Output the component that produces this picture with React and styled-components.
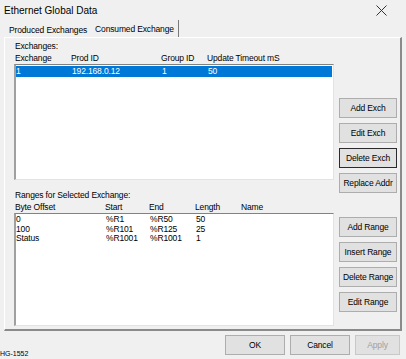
import React from 'react';
import styled, { createGlobalStyle } from 'styled-components';

const GlobalStyle = createGlobalStyle`
  html, body { margin: 0; padding: 0; background: #f0f0f0; }
  body { font-family: "Liberation Sans", Arial, sans-serif; color: #000; }
`;

const Window = styled.div`
  width: 406px;
  height: 359px;
  display: flex;
  flex-direction: column;
  background: #f0f0f0;
  overflow: hidden;
`;

const TitleBar = styled.div`
  height: 20px;
  display: flex;
  align-items: center;
  justify-content: space-between;
  padding: 0 19px 0 4px;
  font-size: 10px;
`;

const TabStrip = styled.div`
  height: 17px;
  display: flex;
  align-items: flex-end;
  padding-left: 5px;
`;

const Tab = styled.div`
  font-size: 8.5px;
  letter-spacing: -0.15px;
  padding: 0 4px;
  border-right: ${({ active }) => (active ? '1px solid #7a7a7a' : 'none')};
  height: ${({ active }) => (active ? '17px' : '15px')};
  display: flex;
  align-items: center;
`;

const Panel = styled.div`
  margin: 0 4px;
  height: 294px;
  box-sizing: border-box;
  border-left: 1px solid #ffffff;
  border-top: 1px solid #ffffff;
  border-right: 2px solid #8a8a8a;
  border-bottom: 2px solid #8a8a8a;
  padding: 2px 0 0 9px;
  display: flex;
  flex-direction: column;
  font-size: 8.5px;
  letter-spacing: -0.15px;
`;

const SectionLabel = styled.div`
  line-height: 12px;
  margin-left: 1px;
  margin-top: ${({ gap }) => gap || 0}px;
`;

const SectionRow = styled.div`
  display: flex;
  align-items: flex-start;
  gap: 5px;
  height: ${({ h }) => h}px;
`;

const ListArea = styled.div`
  width: 320px;
  display: flex;
  flex-direction: column;
`;

const HeaderRow = styled.div`
  display: flex;
  line-height: 12px;
  padding-left: 1px;
`;

const Cell = styled.div`
  width: ${({ w }) => (w ? `${w}px` : 'auto')};
  flex: ${({ w }) => (w ? 'none' : '1')};
  white-space: nowrap;
`;

const ListBox = styled.div`
  height: ${({ h }) => h}px;
  background: #fff;
  border-top: 1px solid #828282;
  border-left: 2px solid #a0a0a0;
  border-right: 1px solid #e3e3e3;
  border-bottom: 1px solid #e3e3e3;
  box-sizing: border-box;
  padding: 1px 1px 0 0;
`;

const Row = styled.div`
  display: flex;
  line-height: ${({ selected }) => (selected ? 11 : 9.5)}px;
  padding-left: 0;
  background: ${({ selected }) => (selected ? '#0078d7' : 'transparent')};
  color: ${({ selected }) => (selected ? '#fff' : '#000')};
`;

const ButtonCol = styled.div`
  display: flex;
  flex-direction: column;
  gap: 5px;
  padding-top: ${({ top }) => top}px;
`;

const Button = styled.div`
  width: ${({ w }) => w || 58}px;
  height: 20px;
  box-sizing: border-box;
  background: #e1e1e1;
  border: 1px solid ${({ focus, disabled }) => (focus ? '#2b2b2b' : disabled ? '#c8c8c8' : '#adadad')};
  color: ${({ disabled }) => (disabled ? '#a0a0a0' : '#000')};
  font-size: 8.5px;
  letter-spacing: -0.15px;
  display: flex;
  align-items: center;
  justify-content: center;
  white-space: nowrap;
`;

const Footer = styled.div`
  flex: 1;
  display: flex;
  align-items: flex-start;
  justify-content: space-between;
  padding: 4px 6px 0 0;
`;

const Stamp = styled.div`
  font-size: 7px;
  align-self: flex-end;
  margin-bottom: 2px;
`;

const FooterButtons = styled.div`
  display: flex;
  gap: 5px;
`;

const CloseIcon = () => (
  <svg width="11" height="11" viewBox="0 0 11 11">
    <path d="M0.5 0.5 L10.5 10.5 M10.5 0.5 L0.5 10.5" stroke="#333" strokeWidth="1" />
  </svg>
);

const exchCols = [56, 90, 46, 0];
const rangeCols = [90, 44, 46, 46, 0];

const exchanges = [['1', '192.168.0.12', '1', '50']];
const ranges = [
  ['0', '%R1', '%R50', '50', ''],
  ['100', '%R101', '%R125', '25', ''],
  ['Status', '%R1001', '%R1001', '1', ''],
];

export default function App() {
  return (
    <Window>
      <GlobalStyle />
      <TitleBar>
        <span>Ethernet Global Data</span>
        <CloseIcon />
      </TitleBar>
      <TabStrip>
        <Tab>Produced Exchanges</Tab>
        <Tab active>Consumed Exchange</Tab>
      </TabStrip>
      <Panel>
        <SectionLabel>Exchanges:</SectionLabel>
        <SectionRow h={128}>
          <ListArea>
            <HeaderRow>
              {['Exchange', 'Prod ID', 'Group ID', 'Update Timeout mS'].map((h, i) => (
                <Cell key={h} w={exchCols[i]}>{h}</Cell>
              ))}
            </HeaderRow>
            <ListBox h={116}>
              {exchanges.map((r, j) => (
                <Row key={j} selected>
                  {r.map((v, i) => <Cell key={i} w={exchCols[i]}>{v}</Cell>)}
                </Row>
              ))}
            </ListBox>
          </ListArea>
          <ButtonCol top={46}>
            <Button>Add Exch</Button>
            <Button>Edit Exch</Button>
            <Button focus>Delete Exch</Button>
            <Button>Replace Addr</Button>
          </ButtonCol>
        </SectionRow>
        <SectionLabel gap={9}>Ranges for Selected Exchange:</SectionLabel>
        <SectionRow h={125}>
          <ListArea>
            <HeaderRow>
              {['Byte Offset', 'Start', 'End', 'Length', 'Name'].map((h, i) => (
                <Cell key={h} w={rangeCols[i]}>{h}</Cell>
              ))}
            </HeaderRow>
            <ListBox h={113}>
              {ranges.map((r, j) => (
                <Row key={j}>
                  {r.map((v, i) => <Cell key={i} w={rangeCols[i]}>{v}</Cell>)}
                </Row>
              ))}
            </ListBox>
          </ListArea>
          <ButtonCol top={16}>
            <Button>Add Range</Button>
            <Button>Insert Range</Button>
            <Button>Delete Range</Button>
            <Button>Edit Range</Button>
          </ButtonCol>
        </SectionRow>
      </Panel>
      <Footer>
        <Stamp>HG-1552</Stamp>
        <FooterButtons>
          <Button w={60}>OK</Button>
          <Button w={60}>Cancel</Button>
          <Button w={45} disabled>Apply</Button>
        </FooterButtons>
      </Footer>
    </Window>
  );
}
